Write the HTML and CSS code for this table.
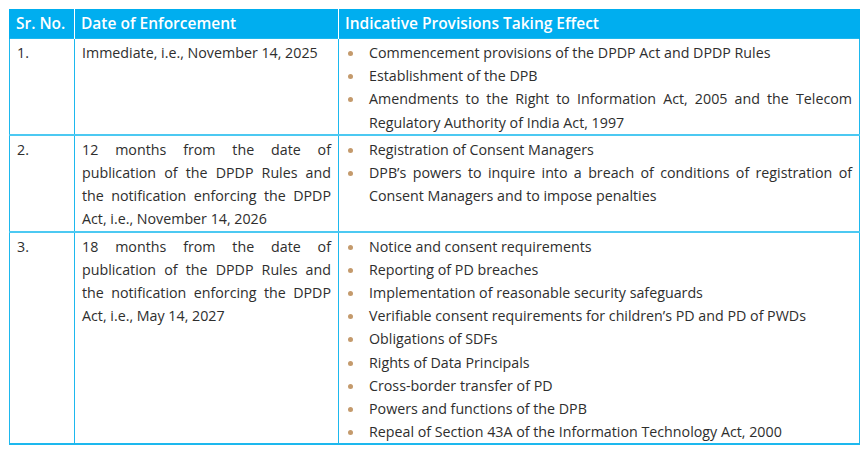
FILE: index.html
```html
<!DOCTYPE html>
<html lang="en">
<head>
<meta charset="utf-8">
<title>DPDP Rules Enforcement</title>
<link rel="stylesheet" href="styles.css">
</head>
<body>
<table class="tbl">
  <colgroup>
    <col class="c1"><col class="c2"><col class="c3">
  </colgroup>
  <thead>
    <tr><th>Sr. No.</th><th>Date of Enforcement</th><th>Indicative Provisions Taking Effect</th></tr>
  </thead>
  <tbody>
    <tr>
      <td>1.</td>
      <td>Immediate, i.e., November 14, 2025</td>
      <td>
        <ul class="list">
          <li>Commencement provisions of the DPDP Act and DPDP Rules</li>
          <li>Establishment of the DPB</li>
          <li>Amendments to the Right to Information Act, 2005 and the Telecom Regulatory Authority of India Act, 1997</li>
        </ul>
      </td>
    </tr>
    <tr>
      <td>2.</td>
      <td class="just">12 months from the date of publication of the DPDP Rules and the notification enforcing the DPDP Act, i.e., November 14, 2026</td>
      <td>
        <ul class="list">
          <li>Registration of Consent Managers</li>
          <li>DPB’s powers to inquire into a breach of conditions of registration of Consent Managers and to impose penalties</li>
        </ul>
      </td>
    </tr>
    <tr>
      <td>3.</td>
      <td class="just">18 months from the date of publication of the DPDP Rules and the notification enforcing the DPDP Act, i.e., May 14, 2027</td>
      <td>
        <ul class="list">
          <li>Notice and consent requirements</li>
          <li>Reporting of PD breaches</li>
          <li>Implementation of reasonable security safeguards</li>
          <li>Verifiable consent requirements for children’s PD and PD of PWDs</li>
          <li>Obligations of SDFs</li>
          <li>Rights of Data Principals</li>
          <li>Cross-border transfer of PD</li>
          <li>Powers and functions of the DPB</li>
          <li>Repeal of Section 43A of the Information Technology Act, 2000</li>
        </ul>
      </td>
    </tr>
  </tbody>
</table>
</body>
</html>
```
FILE: styles.css
```css
html, body { margin: 0; padding: 0; background: #fff; }
body { padding: 9px 0 0 9px; font-family: "Open Sans", "Noto Sans", sans-serif; color: #2e2e2e; }
.tbl {
  border-collapse: collapse;
  width: 850px;
  table-layout: fixed;
  font-size: 14.25px;
  line-height: 23.2px;
}
.c1 { width: 65px; }
.c2 { width: 264px; }
.c3 { width: 521px; }
.tbl th {
  background: #00aeef;
  color: #fff;
  font-weight: 600;
  font-size: 15.5px;
  text-align: left;
  height: 29px;
  padding: 0 6px;
  border-left: 1px solid #fff;
  line-height: 29px;
}
.tbl th:first-child { border-left: 1px solid #00aeef; }
.tbl th:last-child { border-right: 1px solid #00aeef; }
.tbl td {
  vertical-align: top;
  padding: 2px 7px 0 7px;
  border: 1px solid #1db8ee;
  border-bottom: 2px solid #4cc9f2;
}
.tbl tr:last-child td { border-bottom: 2px solid #1db8ee; }
.just { text-align: justify; }
.list { list-style: none; margin: 0; padding: 0; }
.list li { position: relative; padding-left: 23px; text-align: justify; }
.list li::before {
  content: "";
  position: absolute;
  left: 2px;
  top: 10px;
  width: 5px;
  height: 5px;
  border-radius: 50%;
  background: #c49a6c;
}
```
